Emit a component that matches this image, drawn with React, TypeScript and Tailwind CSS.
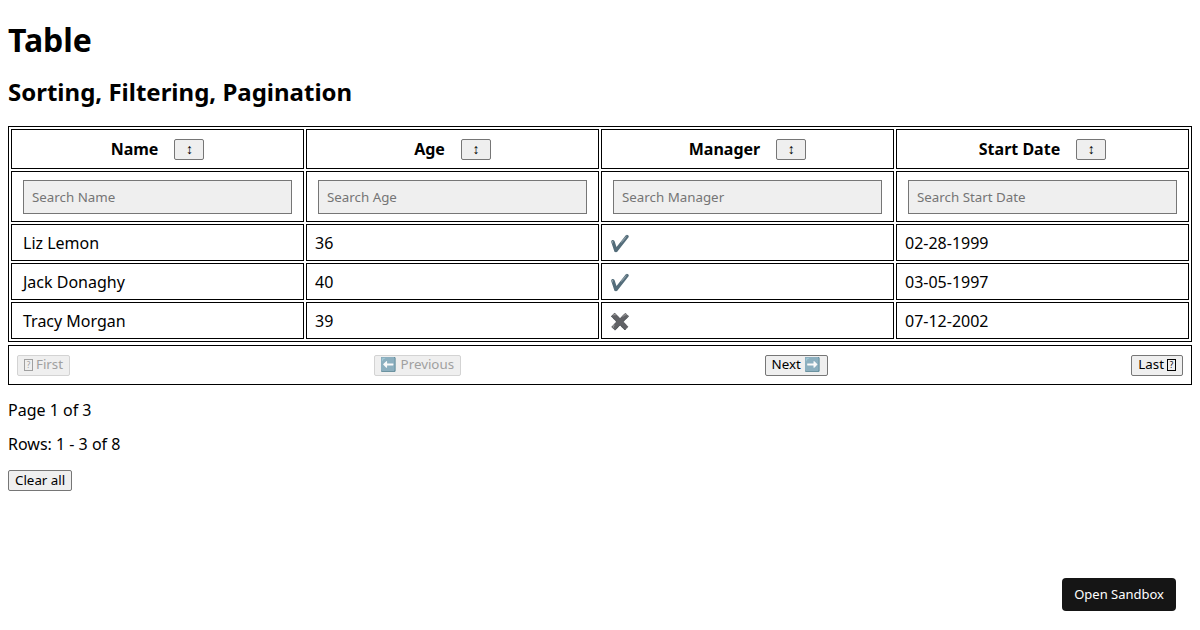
import React from 'react'

const rows = [
  { name: 'Liz Lemon', age: 36, manager: true, start: '02-28-1999' },
  { name: 'Jack Donaghy', age: 40, manager: true, start: '03-05-1997' },
  { name: 'Tracy Morgan', age: 39, manager: false, start: '07-12-2002' },
]

const cols = ['Name', 'Age', 'Manager', 'Start Date']

const btn =
  'px-[6px] h-[21px] text-[13.33px] leading-none border rounded-[2px] bg-[#efefef] inline-flex items-center gap-[3px]'

const Tofu = () => (
  <span className="inline-flex items-center justify-center w-[9px] h-[12px] border border-current text-[8px] leading-none">?</span>
)

export default function App() {
  return (
    <div className="min-h-[630px] bg-white px-2 text-black font-['Liberation_Sans',Arial,sans-serif]">
      <h1 className="pt-[21px] text-[32px] font-bold leading-[37px]">Table</h1>
      <h2 className="mt-[20px] text-[24px] font-bold leading-[28px]">Sorting, Filtering, Pagination</h2>
      <table className="mt-[20px] w-full border border-black border-separate border-spacing-[2px] text-[16px]">
        <thead>
          <tr>
            {cols.map(c => (
              <th key={c} className="border border-black h-[40px] font-bold">
                <span className="inline-flex items-center gap-4">
                  {c}
                  <span className={btn + ' border-[#767676] w-[30px] justify-center text-[14px]'}>↕</span>
                </span>
              </th>
            ))}
          </tr>
          <tr>
            {cols.map(c => (
              <th key={c} className="border border-black h-[51px] px-[11px] font-normal">
                <input
                  placeholder={'Search ' + c}
                  className="w-full h-[34px] px-2 bg-[#efefef] border border-[#767676] text-[13.33px] placeholder:text-[#757575]"
                />
              </th>
            ))}
          </tr>
        </thead>
        <tbody>
          {rows.map(r => (
            <tr key={r.name}>
              <td className="border border-black h-[37px] px-[11px]">{r.name}</td>
              <td className="border border-black px-[8px]">{r.age}</td>
              <td className="border border-black px-[8px]">{r.manager ? '✔' : '✖'}</td>
              <td className="border border-black px-[8px]">{r.start}</td>
            </tr>
          ))}
        </tbody>
      </table>
      <div className="mt-[3px] h-[40px] border border-black flex items-center justify-between px-2">
        <button disabled className={btn + ' border-[#d3d3d3] text-[#a0a0a0]'}><Tofu /> First</button>
        <button disabled className={btn + ' border-[#d3d3d3] text-[#a0a0a0]'}>⬅ Previous</button>
        <button className={btn + ' border-[#767676]'}>Next ➡</button>
        <button className={btn + ' border-[#767676]'}>Last <Tofu /></button>
      </div>
      <p className="mt-[16px] leading-[18px]">Page 1 of 3</p>
      <p className="mt-[16px] leading-[18px]">Rows: 1 - 3 of 8</p>
      <button className={btn + ' border-[#767676] mt-[17px]'}>Clear all</button>
      <div className="fixed right-[24px] bottom-[19px] bg-[#151515] text-white text-[13px] rounded-[4px] px-3 h-[33px] flex items-center">
        Open Sandbox
      </div>
    </div>
  )
}
